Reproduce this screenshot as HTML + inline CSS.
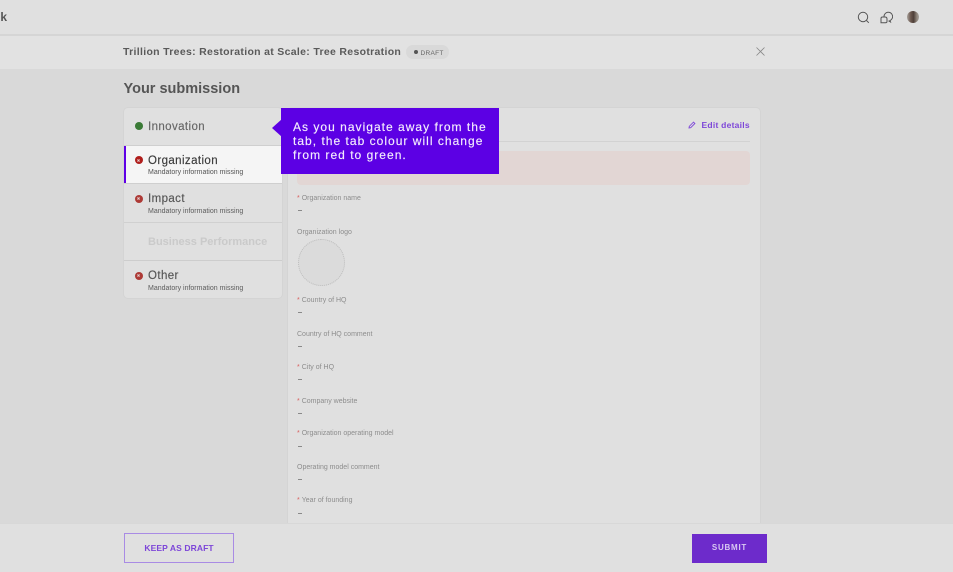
<!DOCTYPE html>
<html><head><meta charset="utf-8">
<style>
*{box-sizing:border-box}
html,body{margin:0;padding:0}
body{width:953px;height:572px;overflow:hidden;background:#d9d9d9;position:relative;font-family:"Liberation Sans",sans-serif}
.a{position:absolute;white-space:nowrap}
.lab{position:absolute;left:297px;font-size:7px;line-height:9px;color:#8d8d8d;white-space:nowrap}
.lab i{color:#d9605f;font-style:normal;margin-right:2px}
.dash{position:absolute;left:298px;width:4px;height:1px;background:#8a8a8a}
.t{position:absolute;left:148px;font-size:11.5px;line-height:13px;color:#555;letter-spacing:.4px;white-space:nowrap;-webkit-text-stroke:.15px currentColor}
.s{position:absolute;left:148px;font-size:7px;line-height:9px;color:#5c5c5c;white-space:nowrap}
.dot{position:absolute;left:134.5px;width:8px;height:8px;border-radius:50%;background:#ad3a36}
.dot:after{content:"";position:absolute;left:2.5px;top:3.5px;width:3px;height:1px;background:#e5d5d5;transform:rotate(45deg)}
.dot:before{content:"";position:absolute;left:2.5px;top:3.5px;width:3px;height:1px;background:#e5d5d5;transform:rotate(-45deg)}
.div{position:absolute;left:124px;width:158px;height:1px;background:#d0d0d0}
</style></head><body>
<div class="a" style="left:0;top:0;width:953px;height:35px;background:#e0e0e0"></div>
<div class="a" style="left:0;top:34px;width:953px;height:2px;background:#d5d5d5"></div>
<div class="a" style="left:0;top:36px;width:953px;height:33px;background:#e2e2e2"></div>
<div class="a" style="left:-7px;top:10px;font-size:12px;line-height:14px;font-weight:bold;color:#555">nk</div>

<svg class="a" style="left:857px;top:11px" width="13" height="13" viewBox="0 0 13 13" fill="none" stroke="#555" stroke-width="1"><circle cx="6" cy="6" r="4.7"/><path d="M9.5 9.5L11.8 11.8"/></svg>
<svg class="a" style="left:880px;top:11px" width="13" height="13" viewBox="0 0 13 13" fill="none" stroke="#555" stroke-width="1"><path d="M4 5.5A4.3 4.3 0 1 1 10 9.5L10.5 11L8.5 9.8"/><path d="M1 7.5Q1 6 2.5 6H5Q7 6 7 8V10.5Q7 11.7 5.5 11.7H1Z"/></svg>
<div class="a" style="left:907px;top:11px;width:12px;height:12px;border-radius:50%;background:linear-gradient(90deg,#a9a49e 0,#6e5a50 30%,#4e3f38 55%,#8d8379 80%,#a9a49e 100%)"></div>

<div class="a" style="left:123px;top:46px;font-size:10.5px;line-height:13px;font-weight:bold;color:#5a5a5a;letter-spacing:.31px">Trillion Trees: Restoration at Scale: Tree Resotration</div>
<div class="a" style="left:406px;top:45px;width:43px;height:14px;border-radius:7px;background:#d9d9d9"></div>
<div class="a" style="left:414px;top:50px;width:4px;height:4px;border-radius:50%;background:#555"></div>
<div class="a" style="left:420.5px;top:49px;font-size:6.5px;line-height:9px;color:#666;letter-spacing:.3px">DRAFT</div>
<svg class="a" style="left:756px;top:47px" width="9" height="9" viewBox="0 0 9 9" stroke="#888" stroke-width=".8"><path d="M.5.5L8.5 8.5M8.5.5L.5 8.5"/></svg>

<div class="a" style="left:123.5px;top:80px;font-size:14.5px;line-height:18px;font-weight:bold;color:#555">Your submission</div>

<!-- left tabs -->
<div class="a" style="left:123px;top:107px;width:160px;height:192px;background:#e0e0e0;border:1px solid #d4d4d4;border-radius:5px"></div>
<div class="a" style="left:124px;top:145px;width:158px;height:39px;background:#f5f5f5;border-top:1px solid #cfcfcf;border-bottom:1px solid #cfcfcf"></div>
<div class="a" style="left:124px;top:146px;width:2px;height:37px;background:#5f00e6"></div>
<div class="div" style="top:222px"></div>
<div class="div" style="top:260px;background:#cdcdcd"></div>

<div class="a" style="left:134.5px;top:122px;width:8px;height:8px;border-radius:50%;background:#3a7a36"></div>
<div class="t" style="top:121px;color:#666">Innovation</div>
<div class="dot" style="top:156px;background:#b01e1c"></div>
<div class="t" style="top:155px;color:#3a3a3a">Organization</div>
<div class="s" style="top:168px;color:#555">Mandatory information missing</div>
<div class="dot" style="top:194.5px"></div>
<div class="t" style="top:193px">Impact</div>
<div class="s" style="top:207px">Mandatory information missing</div>
<div class="t" style="top:236px;color:#cacaca;font-weight:bold;-webkit-text-stroke:0;letter-spacing:0;font-size:11px">Business Performance</div>
<div class="dot" style="top:271.5px"></div>
<div class="t" style="top:270px">Other</div>
<div class="s" style="top:284px">Mandatory information missing</div>

<!-- right panel -->
<div class="a" style="left:287px;top:107px;width:474px;height:417px;background:#e0e0e0;border:1px solid #d4d4d4;border-bottom:0;border-radius:5px 5px 0 0"></div>
<div class="a" style="left:297px;top:141px;width:453px;height:1px;background:#d2d2d2"></div>
<div class="a" style="left:297px;top:151px;width:453px;height:34px;background:#e2d6d4;border-radius:4px"></div>
<svg class="a" style="left:688px;top:121px" width="8" height="8" viewBox="0 0 8 8" fill="none" stroke="#7d46d8" stroke-width=".9"><path d="M1 7L1.3 5.3L5.5 1.1L6.9 2.5L2.7 6.7Z"/></svg>
<div class="a" style="left:701.5px;top:120px;font-size:8.5px;line-height:11px;font-weight:bold;color:#7d46d8;letter-spacing:.25px">Edit details</div>

<div class="lab" style="top:194px"><i>*</i>Organization name</div><div class="dash" style="top:210px"></div>
<div class="lab" style="top:228px">Organization logo</div>
<div class="a" style="left:298px;top:239px;width:47px;height:47px;border-radius:50%;background:#dbdbdb;border:1px dotted #bdbdbd"></div>
<div class="lab" style="top:296px"><i>*</i>Country of HQ</div><div class="dash" style="top:312px"></div>
<div class="lab" style="top:330px">Country of HQ comment</div><div class="dash" style="top:346px"></div>
<div class="lab" style="top:363px"><i>*</i>City of HQ</div><div class="dash" style="top:379px"></div>
<div class="lab" style="top:397px"><i>*</i>Company website</div><div class="dash" style="top:413px"></div>
<div class="lab" style="top:429px"><i>*</i>Organization operating model</div><div class="dash" style="top:446px"></div>
<div class="lab" style="top:463px">Operating model comment</div><div class="dash" style="top:479px"></div>
<div class="lab" style="top:496px"><i>*</i>Year of founding</div><div class="dash" style="top:513px"></div>

<!-- tooltip -->
<div class="a" style="left:281px;top:108px;width:218px;height:66px;background:#5c00e4"></div>
<svg class="a" style="left:272px;top:119px" width="10" height="18" viewBox="0 0 10 18"><path d="M10 0V18L0 9Z" fill="#5c00e4"/></svg>
<div class="a" style="left:293px;top:120px;font-size:12px;line-height:14px;color:#f3ecfd;letter-spacing:1.02px;-webkit-text-stroke:.15px currentColor">As you navigate away from the<br>tab, the tab colour will change<br>from red to green.</div>

<!-- footer -->
<div class="a" style="left:0;top:523px;width:953px;height:49px;background:#e0e0e0;border-top:1px solid #d8d8d8"></div>
<div class="a" style="left:124px;top:533px;width:110px;height:30px;border:1px solid #a98be4;background:#e0e0e0"></div>
<div class="a" style="left:124px;top:543px;width:110px;text-align:center;font-size:8.5px;line-height:10px;font-weight:bold;color:#7d46d8;letter-spacing:.1px">KEEP AS DRAFT</div>
<div class="a" style="left:692px;top:534px;width:75px;height:29px;background:#6d2bcb"></div>
<div class="a" style="left:692px;top:543px;width:75px;text-align:center;font-size:8px;line-height:10px;font-weight:bold;color:#d9c9f2;letter-spacing:.75px">SUBMIT</div>
</body></html>
